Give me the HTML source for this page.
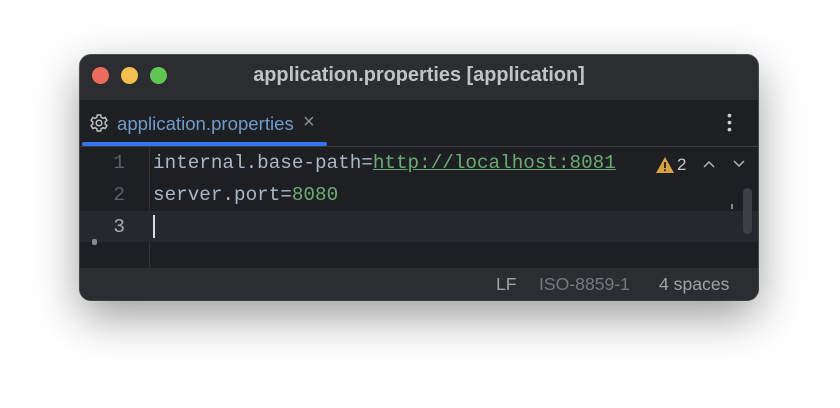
<!DOCTYPE html>
<html><head><style>
body{margin:0;width:840px;height:408px;background:#fff;position:relative;overflow:hidden;font-family:"Liberation Sans",sans-serif}
.win{position:absolute;left:80px;top:55px;width:678px;height:245px;border-radius:11px;background:#1e1f22;overflow:hidden;box-shadow:0 16px 45px rgba(0,0,0,.4),0 0 0 1px #555;}
.title{position:absolute;left:0;top:0;width:100%;height:45px;background:#2b2d30;}
.title .t{position:absolute;left:0;right:0;top:9px;text-align:center;color:#c2c3c5;font-weight:bold;font-size:19.9px}
.dot{position:absolute;top:12px;width:17px;height:17px;border-radius:50%}
.tabs{position:absolute;left:0;top:45px;width:100%;height:46px;background:#1e1f22;border-bottom:1px solid #393b40}
.tab{position:absolute;left:37px;top:13px;color:#6f9bcb;font-size:18.6px}
.x{position:absolute;left:223px;top:11px;color:#8a8c90;font-size:20px}
.ul{position:absolute;left:2px;top:42px;width:245px;height:4px;background:#3574f0;border-radius:2px}
.mono{font-family:"Liberation Mono",monospace;font-size:19.3px}
.ln{position:absolute;width:40px;text-align:right;color:#5c5f66}
.code{position:absolute;left:73px;color:#a9b7c6}
.status{position:absolute;left:0;top:213px;width:100%;height:32px;background:#2b2d30;color:#a0a2a6;font-size:17.6px}
</style></head><body>
<div class="win">
 <div class="title">
  <div class="dot" style="left:12px;background:#ed6a5e"></div>
  <div class="dot" style="left:41px;background:#f4bf4f"></div>
  <div class="dot" style="left:70px;background:#61c554"></div>
  <div class="t">application.properties [application]</div>
 </div>
 <div class="tabs">
  <svg style="position:absolute;left:9px;top:13px" width="20" height="20" viewBox="0 0 20 20" fill="none" stroke="#c0c2c5" stroke-width="1.5"><path d="M8.3 2h3.4l.5 2.3 1.8 1 2.2-.8 1.7 2.9-1.7 1.6v2l1.7 1.6-1.7 2.9-2.2-.8-1.8 1-.5 2.3H8.3l-.5-2.3-1.8-1-2.2.8-1.7-2.9L3.8 11V9L2.1 7.4l1.7-2.9 2.2.8 1.8-1z"/><circle cx="10" cy="10" r="2.8"/></svg>
  <div class="tab">application.properties</div>
  <div class="x">×</div>
  <div style="position:absolute;left:647px;top:12px;width:3px;color:#ccc;font-size:14px;line-height:7px">•<br>•<br>•</div>
  <div class="ul"></div>
 </div>
 <div style="position:absolute;left:69px;top:92px;width:1px;height:121px;background:#313338"></div>
 <div style="position:absolute;left:0;top:156px;width:100%;height:31px;background:#26282e"></div>
 <div class="mono">
  <div class="ln" style="left:5px;top:97px">1</div>
  <div class="ln" style="left:5px;top:129px">2</div>
  <div class="ln" style="left:5px;top:161px;color:#a8abb0">3</div>
  <div class="code" style="top:97px">internal.base-path=<span style="color:#6aab73;text-decoration:underline">http://localhost:8081</span></div>
  <div class="code" style="top:129px">server.port=<span style="color:#6aab73">8080</span></div>
 </div>
 <div style="position:absolute;left:73px;top:160px;width:2px;height:23px;background:#ddd"></div>
 <div style="position:absolute;left:12px;top:184px;width:5px;height:6px;border-radius:2px;background:#888"></div>
 <svg style="position:absolute;left:575px;top:101px" width="20" height="18" viewBox="0 0 20 18"><path d="M10 1L19 17H1z" fill="#d9a343"/><rect x="9.1" y="6" width="1.8" height="6" fill="#1e1f22"/><rect x="9.1" y="13.3" width="1.8" height="1.8" fill="#1e1f22"/></svg>
 <div style="position:absolute;left:597px;top:100px;color:#c8c9cc;font-size:17px">2</div>
 <svg style="position:absolute;left:622px;top:104px" width="14" height="10"><path d="M2 8l5-5 5 5" stroke="#b0b2b6" stroke-width="1.5" fill="none"/></svg>
 <svg style="position:absolute;left:652px;top:104px" width="14" height="10"><path d="M2 2l5 5 5-5" stroke="#b0b2b6" stroke-width="1.5" fill="none"/></svg>
 <div style="position:absolute;left:663px;top:133px;width:9px;height:46px;border-radius:5px;background:#3d3f44"></div>
 <div style="position:absolute;left:651px;top:149px;width:2px;height:5px;background:#888"></div>
 <div class="status">
  <span style="position:absolute;left:416px;top:6px">LF</span>
  <span style="position:absolute;left:459px;top:6px;color:#76787d">ISO-8859-1</span>
  <span style="position:absolute;left:579px;top:6px">4 spaces</span>
 </div>
</div>
</body></html>
